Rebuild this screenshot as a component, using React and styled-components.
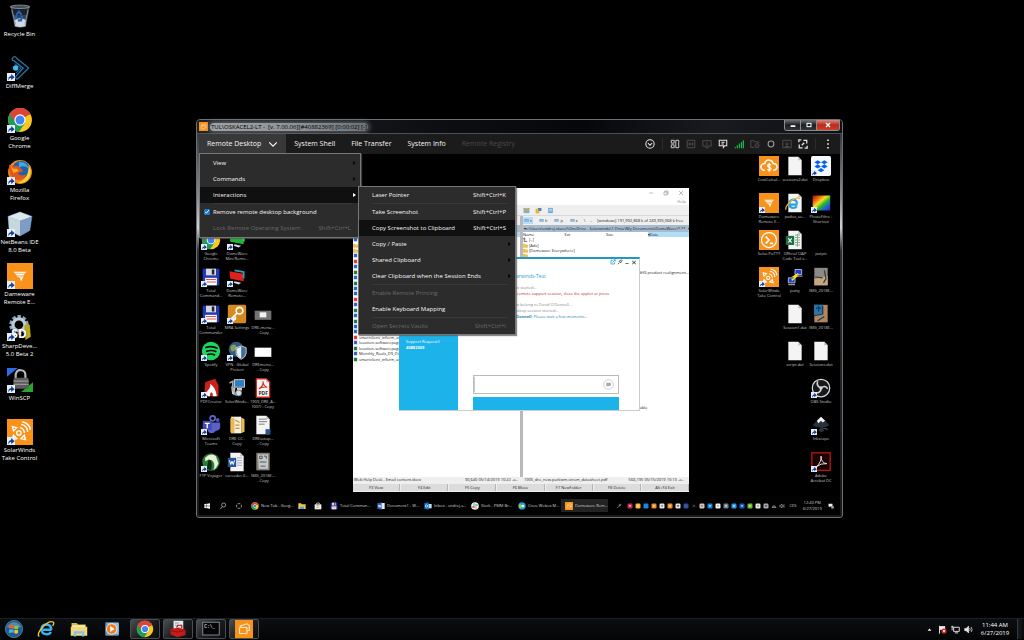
import React from 'react'
import styled, { createGlobalStyle, css } from 'styled-components'

const GlobalStyle = createGlobalStyle`
  * {
    box-sizing: border-box;
  }
  body {
    margin: 0;
    background: #000;
    color: #fff;
    font-family: 'Open Sans', 'Noto Sans', sans-serif;
    font-size: 6px;
    line-height: 8px;
  }
  button, input, textarea, table {
    font: inherit;
    color: inherit;
  }
  button {
    border: 0;
    padding: 0;
    background: none;
  }
  svg {
    display: block;
  }
`

/* ---------- desktop ---------- */

const Desktop = styled.div`
  position: relative;
  min-height: 100vh;
  display: flex;
  flex-direction: column;
  overflow: hidden;
`

const DesktopIcons = styled.main`
  flex: 1;
  display: flex;
  flex-direction: column;
  align-items: flex-start;
  padding-top: 3px;
`

const Shortcut = styled.button`
  width: 39px;
  height: 52px;
  display: flex;
  flex-direction: column;
  align-items: center;
  gap: 1px;
  white-space: pre;
  text-align: center;
  line-height: 8px;
`

const Picture = styled.span`
  position: relative;
  width: ${(p) => p.$size}px;
  height: ${(p) => p.$size}px;
  flex: none;

  > svg {
    width: 100%;
    height: 100%;
  }
`

const ArrowBadge = styled.span`
  position: absolute;
  left: 0;
  bottom: 0;
  width: 32%;
  height: 32%;
  background: #e8eef6;

  svg {
    width: 100%;
    height: 100%;
  }
`

const Taskbar = styled.footer`
  height: 22px;
  padding-bottom: 1px;
  display: flex;
  align-items: stretch;
  gap: 3px;
  background: linear-gradient(#0c0f12, #030405);
  border-top: 1px solid #1b2024;
`

const TaskButton = styled.button`
  width: ${(p) => (p.$start ? 28 : 30)}px;
  display: flex;
  align-items: center;
  justify-content: center;
  ${(p) => p.$open && css`
    border: 1px solid #4a4d50;
    border-radius: 2px;
    background: linear-gradient(135deg, #4b4e51, #1d1f21 50%, #0b0c0d);
  `}

  svg {
    width: 18px;
    height: 18px;
  }
`

const Tray = styled.div`
  margin-left: auto;
  display: flex;
  align-items: center;
  gap: 4px;
`

const TrayIcon = styled.button`
  width: 9px;

  svg {
    width: 9px;
    height: 9px;
  }
`

const Clock = styled.time`
  width: 36px;
  text-align: center;
  white-space: pre;
`

const ShowDesktop = styled.button`
  align-self: stretch;
  width: 7px;
  border-left: 1px solid #33383c;
  background: linear-gradient(90deg, #1a1d20, #060708);
`

/* ---------- remote session window ---------- */

const SessionWindow = styled.section`
  position: absolute;
  left: 196px;
  right: 181px;
  top: 119px;
  bottom: 122px;
  display: flex;
  flex-direction: column;
  padding: 0 2px 2px;
  border: 1px solid #6b7075;
  border-radius: 4px 4px 3px 3px;
  background: linear-gradient(#25292d, #8c9094 20%, #d0d3d5 27%, #2a2e31 33%, #17191b);
`

const TitleBar = styled.header`
  height: 14px;
  margin: 0 -2px;
  padding-left: 2px;
  display: flex;
  align-items: center;
  gap: 2px;
  border-radius: 3px 3px 0 0;
  background: linear-gradient(100deg, #202428, #0d1013 35%, #05080b 60%, #171b20 80%, #0d0f12);
  border-bottom: 1px solid #4b5054;

  > svg {
    width: 9px;
    height: 9px;
  }
`

const WindowTitle = styled.h1`
  margin: 0;
  padding: 0 1px;
  font-size: 6px;
  font-weight: 400;
  line-height: 8px;
  color: #000;
  white-space: pre;
  border-radius: 4px;
  background: linear-gradient(90deg, #9fa3a6, #8b9094 60%, #6c7175);
  box-shadow: 0 0 4px 2px rgba(140, 146, 152, 0.5);
`

const Caption = styled.div`
  align-self: flex-start;
  margin-left: auto;
  margin-right: 2px;
  display: flex;
  border: 1px solid #8a8e91;
  border-top: 0;
  border-radius: 0 0 3px 3px;
  overflow: hidden;
`

const CaptionButton = styled.button`
  width: ${(p) => (p.$close ? 22 : 16)}px;
  height: 10px;
  display: flex;
  align-items: center;
  justify-content: center;
  border-right: ${(p) => (p.$close ? '0' : '1px solid #8a8e91')};
  background: ${(p) => (p.$close
    ? 'linear-gradient(#d98a80, #bb2a1b 50%, #c8442f)'
    : 'linear-gradient(#6d7276, #1c1f22 50%, #33373a)')};

  svg {
    width: 8px;
    height: 8px;
  }
`

const Toolbar = styled.nav`
  height: 20px;
  display: flex;
  align-items: stretch;
  background: #1b1b1b;
`

const TabSlot = styled.div`
  position: relative;
  display: flex;
`

const Tab = styled.button`
  display: flex;
  align-items: center;
  gap: 7px;
  padding: 0 8px;
  font-size: 7px;
  white-space: nowrap;
  color: ${(p) => (p.disabled ? '#4a4a4a' : '#f4f4f4')};
  background: ${(p) => (p.$active ? '#383838' : 'none')};

  svg {
    width: 10px;
    height: 10px;
  }
`

const Actions = styled.div`
  margin-left: auto;
  padding-right: 4px;
  display: flex;
  align-items: center;
`

const ActionButton = styled.button`
  width: 16px;
  height: 16px;
  display: flex;
  align-items: center;
  justify-content: center;
  color: ${(p) => (p.$dim ? '#565656' : '#e6e6e6')};

  svg {
    width: 10px;
    height: 10px;
  }
`

const ActionDivider = styled.span`
  width: 1px;
  height: 12px;
  margin: 0 4px;
  background: #2c2c2c;
`

const Menu = styled.ul`
  position: absolute;
  z-index: 3;
  left: ${(p) => (p.$nested ? 158 : 0)}px;
  top: ${(p) => (p.$nested ? -1 : 19)}px;
  width: ${(p) => (p.$nested ? 158 : 162)}px;
  margin: 0;
  padding: ${(p) => (p.$nested ? '0' : '1px 0')};
  list-style: none;
  background: #2c2c2c;
  border: 1px solid #777;
  box-shadow: 1px 1px 1px rgba(90, 90, 90, 0.7);
`

const MenuRow = styled.li`
  position: relative;
  height: 16px;
  display: flex;
  align-items: center;
  padding: 0 9px 0 13px;
  font-weight: 500;
  white-space: nowrap;
  color: ${(p) => (p.$disabled ? '#6a6a6a' : '#f6f6f6')};
  background: ${(p) => (p.$active ? '#101010' : 'none')};
`

const MenuButton = styled.button`
  flex: 1;
  display: flex;
  justify-content: space-between;
  font-weight: inherit;
`

const MenuLabel = styled.label`
  display: flex;
  align-items: center;
  gap: 3px;
  margin-left: -9px;

  input {
    width: 6px;
    height: 6px;
    margin: 0;
    accent-color: #1677c9;
  }
`

const MenuSeparator = styled.li`
  height: 1px;
  margin: 0 7px 0 13px;
  background: #383838;
`

const Caret = styled.span`
  position: absolute;
  right: 4px;
  border-left: 3px solid ${(p) => (p.$active ? '#fff' : '#0a0a0a')};
  border-top: 2px solid transparent;
  border-bottom: 2px solid transparent;
`

/* ---------- remote desktop contents ---------- */

const RemoteDesktop = styled.div`
  position: relative;
  flex: 1;
  display: flex;
  justify-content: space-between;
  padding-top: 2px;
  padding-right: 7px;
  background: #000;
`

const RemoteIcons = styled.div`
  display: grid;
  grid-template-columns: repeat(3, 24px);
  grid-auto-rows: 37px;
  column-gap: 2px;
`

const RemoteShortcut = styled.button`
  grid-row: ${(p) => p.$row};
  grid-column: ${(p) => p.$col};
  display: flex;
  flex-direction: column;
  align-items: center;
  gap: 1px;
  font-size: 4px;
  line-height: 5px;
  white-space: pre;
  color: #c4c4c4;
`

const RemoteTaskbar = styled.div`
  height: 19px;
  display: flex;
  align-items: center;
  padding-right: 6px;
  background: #020202;
  font-size: 4px;
  line-height: 6px;
  color: #d0d0d0;
`

const RemoteTask = styled.button`
  width: ${(p) => (p.$wide ? 47 : 16)}px;
  height: 13px;
  display: flex;
  align-items: center;
  gap: 2px;
  padding: 0 4px;
  white-space: nowrap;
  background: ${(p) => (p.$active ? '#232323' : 'none')};

  svg {
    flex: none;
    width: 8px;
    height: 8px;
  }
`

const RemoteTray = styled.div`
  flex: 1;
  display: flex;
  align-items: center;
  justify-content: space-between;
  padding-left: 8px;

  svg {
    width: 6px;
    height: 6px;
  }
`

const TrayDots = styled.div`
  display: flex;
  gap: 2px;
`

const RemoteClock = styled.time`
  width: 22px;
  text-align: center;
  white-space: pre;
`

const Commander = styled.section`
  position: absolute;
  z-index: 1;
  left: 154px;
  top: 34px;
  width: 336px;
  height: 304px;
  display: flex;
  flex-direction: column;
  background: #fff;
  color: #222;
  font-size: 4px;
  line-height: 5px;
`

const CommanderTitle = styled.header`
  height: 17px;
  padding: 2px 3px 1px;
  display: flex;
  flex-direction: column;
  align-items: flex-end;
  justify-content: space-between;
  color: #777;
`

const CommanderCaption = styled.div`
  display: flex;
  gap: 9px;
  padding-right: 2px;

  svg {
    width: 6px;
    height: 6px;
  }
`

const CommanderTools = styled.div`
  height: 11px;
  display: flex;
  align-items: center;
  gap: 5px;
  padding-left: 158px;
  background: #efefef;
  border-bottom: 1px solid #d8d8d8;

  svg {
    width: 7px;
    height: 7px;
  }
`

const Panes = styled.div`
  flex: 1;
  min-height: 0;
  display: grid;
  grid-template-columns: 167px 3px 1fr;
`

const Splitter = styled.div`
  background: #b9b9bb;
`

const Pane = styled.div`
  min-width: 0;
  overflow: hidden;
`

const Drives = styled.div`
  height: 9px;
  display: flex;
  align-items: center;
  gap: 5px;
  background: #efefef;
  white-space: nowrap;
`

const Drive = styled.button`
  display: flex;
  align-items: center;
  gap: 1px;
  height: 7px;
  padding: 0 1px;
  background: ${(p) => (p.$active ? '#b9dcf8' : 'none')};

  svg {
    width: 5px;
    height: 5px;
  }
`

const PathBar = styled.div`
  height: 7px;
  display: flex;
  align-items: center;
  justify-content: space-between;
  padding: 0 3px 0 1px;
  white-space: pre;
  background: #a9bccf;
  color: #101820;
`

const Files = styled.table`
  width: 100%;
  height: ${(p) => p.$height}px;
  table-layout: fixed;
  border-collapse: collapse;
  line-height: 5px;

  th, td {
    height: 5px;
    padding: 0;
    text-align: left;
    font-weight: 400;
    white-space: nowrap;
  }
  th:last-child {
    background: #b3dcf7;
  }
  td.end {
    text-align: right;
  }
`

const FileName = styled.span`
  display: flex;
  align-items: center;
  gap: 1px;

  svg {
    width: 5px;
    height: 5px;
  }
`

const StatusRow = styled.div`
  height: 6px;
  display: grid;
  grid-template-columns: 170px 1fr;
  background: #efefef;
`

const Status = styled.div`
  display: flex;
  justify-content: space-between;
  padding: 0 5px 0 1px;
  white-space: nowrap;
`

const FunctionKeys = styled.div`
  height: 9px;
  display: grid;
  grid-template-columns: repeat(7, 1fr);
  gap: 1px;
  padding: 1px 0;
  background: #efefef;

  button {
    background: #dcdcdc;
    border-right: 1px solid #b5b5b5;
  }
`

const Applet = styled.section`
  position: absolute;
  z-index: 2;
  left: 200px;
  top: 103px;
  width: 241px;
  height: 154px;
  display: flex;
  background: #fff;
  border-top: 2px solid #2196c8;
  border-right: 1px solid #ccc;
  border-bottom: 1px solid #ccc;
  font-size: 4px;
  line-height: 6px;
`

const AppletSide = styled.aside`
  width: 59px;
  padding: 80px 7px 0;
  background: #1cb3ea;
  color: #fff;
`

const AppletMain = styled.div`
  flex: 1;
  display: flex;
  flex-direction: column;
  padding: 0 20px 0 15px;
`

const AppletCaption = styled.div`
  display: flex;
  justify-content: flex-end;
  gap: 1px;
  height: 6px;
  margin-right: -18px;
  color: #333;

  svg {
    width: 6px;
    height: 6px;
  }
`

const AppletHeading = styled.h2`
  margin: 7px 0 5px 43px;
  font-size: 5px;
  font-weight: 400;
  line-height: 8px;
  color: #1d9fd6;
`

const Messages = styled.div`
  flex: 1;
  padding-left: 43px;
  white-space: nowrap;
`

const Message = styled.p`
  margin: 0;
  color: ${(p) => p.$color || '#888'};
  height: ${(p) => (p.$gap ? 11 : 6)}px;
`

const Reply = styled.div`
  height: 19px;
  margin-bottom: 3px;
  display: flex;
  align-items: center;
  padding-right: 4px;
  border: 1px solid #bbb;

  textarea {
    flex: 1;
    height: 15px;
    padding: 1px;
    border: 0;
    border-left: 1px solid #ccc;
    resize: none;
    color: #333;
    background: none;
  }
  svg {
    width: 11px;
    height: 11px;
  }
`

const SendButton = styled.button`
  height: 13px;
  background: #1cb3ea;
`

/* ---------- drawings ---------- */

const Svg = ({ box = 24, children, ...props }) => (
  <svg viewBox={`0 0 ${box} ${box}`} fill="none" aria-hidden="true" {...props}>{children}</svg>
)

const Line = ({ children, width = 2 }) => (
  <Svg stroke="currentColor" strokeWidth={width}>{children}</Svg>
)

const Chrome = () => (
  <Svg>
    <circle cx="12" cy="12" r="11" fill="#fbc81e" />
    <path d="M12 12L2.5 6.5A11 11 0 0 1 21.5 6.5Z" fill="#db4537" />
    <path d="M12 12L2.5 6.5A11 11 0 0 0 11 23L16.8 14.5Z" fill="#1f9d58" />
    <path d="M12 7H21.8A11 11 0 0 0 2.5 6.5L7.5 14Z" fill="#db4537" />
    <circle cx="12" cy="12" r="5.2" fill="#fff" />
    <circle cx="12" cy="12" r="4.1" fill="#4285f4" />
  </Svg>
)

const RecycleBin = () => (
  <Svg>
    <path d="M3 3L21 3L17.5 22Q12 24 7 22Z" fill="#39434c" />
    <path d="M5 5L19 5L18 11L6 11Z" fill="#1a222a" />
    <path d="M6.5 16Q12 12 17.8 16L17 21.500Q12 23 7.500 21.500Z" fill="#d4d9dd" />
    <ellipse cx="12" cy="3.500" rx="9" ry="1.500" fill="#3f4951" stroke="#949da4" strokeWidth=".8" />
    <path d="M8.500 11L11 8L13.500 11M14 12L13 16H10M9 15L7.800 12" stroke="#2163c4" strokeWidth="2" />
    <path d="M4.500 6L8 20M19.500 6L16.500 20" stroke="#8f9aa3" strokeWidth=".8" />
  </Svg>
)

const DiffMerge = () => (
  <Svg>
    <path d="M5 3Q7 0 9 3L20 12L10 22Q8 23 8 20L15 12L6 5Q4 5 5 3Z" stroke="#2c6f9b" strokeWidth="1.200" fill="#05090d" />
    <path d="M7 8L13 12L8 17" stroke="#1d5f8c" />
    <circle cx="8" cy="12" r="2.500" fill="#40b9ef" />
  </Svg>
)

const Firefox = () => (
  <Svg>
    <circle cx="12" cy="12" r="11" fill="#f08a17" />
    <circle cx="13" cy="9.500" r="8" fill="#1c62ad" />
    <path d="M11 3Q18 2 20 9Q16 5 11 8Z" fill="#48a5dc" />
    <path d="M2 5L6 7Q9 5 12 8L15 11L10 13Q12 17 18 14Q15 21 8 19Q1 17 2 5Z" fill="#e2571b" />
    <path d="M3 6L6 9L9 9L11 11L6 13Z" fill="#f9a529" />
    <path d="M20 6Q24 12 20 18Q16 23 10 22Q20 19 20 6Z" fill="#fcd23e" />
  </Svg>
)

const Cube = () => (
  <Svg>
    <path d="M12 1L23 5L21 18L12 23L2 18L1 5Z" fill="#8ea9c8" stroke="#2c4f85" />
    <path d="M12 1L23 5L12 9L1 5Z" fill="#dde9ed" />
    <path d="M12 9L23 5L21 18L12 23Z" fill="#7f9cc2" />
    <path d="M12 9L1 5L2 18L12 23Z" fill="#c6d7dd" />
  </Svg>
)

const Orange = ({ children }) => (
  <Svg>
    <rect width="24" height="24" fill="#f9921b" />
    {children}
  </Svg>
)

const Dameware = () => (
  <Orange>
    <path d="M6 8L18 8L15.500 11L9 11.500Z" fill="#fff" />
    <path d="M9 12L15.500 11.500L14.500 14L13 17L12 14Z" fill="#fff" />
    <path d="M7 9.500L17 9.500M10 13L15 12.500" stroke="#f9921b" strokeWidth=".6" />
  </Orange>
)

const TakeControl = () => (
  <Orange>
    <g stroke="#fff" strokeWidth="1.300">
      <circle cx="11" cy="13" r="2" />
      <path d="M5 7L9 8L6 11ZM5 19L6 15L9 18ZM17 19L13 18L16 15Z" />
      <path d="M12 8Q16 9 16 13M13 5Q19 6 19 12M14 2.500Q21 4 21.500 10" />
    </g>
  </Orange>
)

const CostCalc = () => (
  <Orange>
    <path d="M7 17H5Q1 15 3 11Q4 9 7 9Q8 4 13 5Q16 5 17 9Q22 9 21.500 14Q21 17 17 17" stroke="#fff" strokeWidth="1.800" />
    <path d="M14.500 11Q12 9 10.500 11Q10 13 12.500 13.500Q15 14 14 16.500Q12 18 10 16M12.300 8.500V19" stroke="#fff" strokeWidth="1.500" />
  </Orange>
)

const SolarPutty = () => (
  <Orange>
    <circle cx="12" cy="12" r="9" stroke="#fff" strokeWidth="1.500" />
    <path d="M8 8L12 12L8 16M13 16H17" stroke="#fff" strokeWidth="2" />
  </Orange>
)

const SharpDevelop = () => (
  <Svg>
    <circle cx="11" cy="9" r="7" stroke="#8fa3b5" strokeWidth="4" strokeDasharray="3 1.500" />
    <circle cx="11" cy="9" r="5.500" stroke="#bccbd8" strokeWidth="3" />
    <path d="M16 10Q18 7 21 9L22 20L17 23Z" fill="#b5a91d" />
    <text x="4" y="21" fontSize="11" fontWeight="700" fill="#fff" stroke="#222" strokeWidth=".5" paintOrder="stroke" fontFamily="Open Sans">SD</text>
  </Svg>
)

const WinScp = () => (
  <Svg>
    <path d="M0 1H10L0 9Z" fill="#2c6ce4" />
    <path d="M24 23H13L24 14Z" fill="#25a82d" />
    <path d="M8 12V7Q9 2 13 3Q17 3 17 8V12" stroke="#b8b8b8" strokeWidth="2" />
    <rect x="6" y="10" width="14" height="10" rx="1.500" fill="#5c5c5c" />
    <path d="M6 13H20M6 16H20" stroke="#969696" />
  </Svg>
)

const WindowsOrb = () => (
  <Svg>
    <circle cx="12" cy="12" r="11.500" fill="#1d5c8e" stroke="#5f8fb0" />
    <path d="M2 9Q12 -4 22 9Q12 14 2 9Z" fill="#6fa5c8" opacity=".6" />
    <path d="M6 7Q9 5 11.500 7V11.500Q8 10 5.500 11.500Z" fill="#ee6030" />
    <path d="M12.500 7Q15 8.500 18 7L17.500 11.500Q15 13 12.500 11.500Z" fill="#8dc63f" />
    <path d="M5.500 13Q8 11.500 11.500 13V17Q8 16 5 17.500Z" fill="#4fb0e8" />
    <path d="M12.500 13Q15 14 17.500 13L17 17.500Q15 18.500 12.500 17.500Z" fill="#fdc72f" />
  </Svg>
)

const Explorer = () => (
  <Svg>
    <path d="M2 4H9L11 6H21V20H2Z" fill="#d9b44d" />
    <path d="M3 7H20V14H3Z" fill="#fbefb5" />
    <path d="M1 9H23V21H1Z" fill="#f3d77e" />
    <path d="M5 15H19V22H16V18H8V22H5Z" fill="#7fc4ec" />
  </Svg>
)

const IeLogo = () => (
  <Svg>
    <path d="M19.500 13H8M19 13Q19 6 12.500 6Q6 6.500 6 13Q6.500 19 13 19Q17 19 18.500 16" stroke="#35b2f2" strokeWidth="3.400" />
    <path d="M3 22Q-1 19 8 9Q17 0 22 3Q23 4 21 8" stroke="#f8c62c" strokeWidth="1.800" />
  </Svg>
)

const MediaPlayer = () => (
  <Svg>
    <rect x="3" y="3" width="18" height="18" rx="1" fill="#5f95bd" />
    <rect x="6" y="4" width="15" height="15" fill="#93c0de" />
    <circle cx="11.500" cy="12" r="7" fill="#ef7a22" stroke="#fff" />
    <path d="M9.500 8L15.500 12L9.500 16Z" fill="#fff" />
  </Svg>
)

const Toolbox = () => (
  <Svg>
    <path d="M6 1H19V12H6Z" fill="#e7e9ea" />
    <path d="M8 4H13M8 7H12" stroke="#6a87a8" />
    <path d="M2 12L13 10L22 13V20L11 23L2 19Z" fill="#c21d1b" />
    <path d="M2 14L11 16L22 14" stroke="#7d0d0d" />
    <path d="M10 10L12 7H17V11" stroke="#9c1514" strokeWidth="1.500" />
  </Svg>
)

const Terminal = () => (
  <Svg>
    <rect x="1" y="3" width="22" height="17" fill="#050505" stroke="#8b8f93" strokeWidth="1.200" />
    <text x="3" y="11" fontSize="6" fill="#fff" fontFamily="Liberation Mono">C:\_</text>
  </Svg>
)

const RemoteApp = () => (
  <Orange>
    <path d="M9 10L7 8L16 5L19 7V14H17" stroke="#ffe9cf" strokeWidth="1.500" />
    <rect x="6" y="10" width="10" height="8" rx="1" stroke="#ffe9cf" strokeWidth="1.500" />
  </Orange>
)

const Floppy = () => (
  <Svg>
    <path d="M2 2H22V22H4L2 20Z" fill="#2338b5" />
    <rect x="6" y="2" width="12" height="8" fill="#d7d9e0" />
    <rect x="13" y="3" width="3" height="6" fill="#222" />
    <rect x="5" y="13" width="14" height="9" fill="#fff" />
    <path d="M6 15H18M6 18H18" stroke="#d33" />
  </Svg>
)

const Panel = ({ color, accent }) => (
  <Svg>
    <path d="M3 5L20 8V17L4 14Z" fill={color} />
    <path d="M9 3L21 5V14L19 13V7L9 5Z" fill={accent} />
    <path d="M9 17L17 19L14 21L8 19Z" fill="#d6dbe0" />
  </Svg>
)

const KeyTile = () => (
  <Svg>
    <rect x="1" y="1" width="22" height="22" rx="2" fill="#d58a20" />
    <circle cx="15" cy="8" r="4" stroke="#fff" strokeWidth="2" />
    <path d="M12 11L5 18V20H8V18H10V15" stroke="#fff" strokeWidth="2" />
  </Svg>
)

const Thumb = ({ gray }) => (
  <Svg>
    <rect x="2" y="8" width="20" height="11" fill={gray ? '#737373' : '#fff'} />
    {gray && <rect x="8" y="10" width="8" height="6" fill="#f2f2f2" />}
  </Svg>
)

const Spotify = () => (
  <Svg>
    <circle cx="12" cy="12" r="11" fill="#1ed760" />
    <path d="M5 8Q13 5 20 9M6 12.500Q13 10 18.500 13M7 16.500Q12 14.500 17 17" stroke="#0a0a0a" strokeWidth="2" />
  </Svg>
)

const Shield = () => (
  <Svg>
    <circle cx="11" cy="10" r="9" fill="#2f5d7e" />
    <path d="M4 7Q9 1 12 8Q8 14 5 12Z" fill="#8e9b57" />
    <path d="M11 8L17 6L23 8V15Q22 20 17 22Q11 19 11 15Z" fill="#3d6f9d" stroke="#dce4ea" />
    <path d="M17 7V21Q12 19 12 14V9Z" fill="#e9eef2" />
  </Svg>
)

const PdfCreator = () => (
  <Svg>
    <path d="M5 5L17 1L21 9V22H4Z" fill="#c9211c" />
    <path d="M8 22Q5 17 10 13Q12 10 11 7Q18 12 19 22L14 22Q15 18 12 17Q10 19 11 22Z" fill="#fff" />
  </Svg>
)

const Setup = () => (
  <Svg>
    <rect x="9" y="2" width="12" height="9" fill="#2e7fc0" stroke="#ddd" />
    <path d="M12 12H18V15H12Z" fill="#ccc" />
    <path d="M5 10L10 12L9 21L6 19Z" fill="#c8ccd0" />
    <path d="M3 6L7 4V13L11 21" stroke="#a6a6a6" strokeWidth="2" />
    <circle cx="14" cy="18" r="3.500" fill="#d8dcdf" stroke="#6a7f92" />
  </Svg>
)

const Page = ({ children }) => (
  <Svg>
    <path d="M4 1H16L20 5V23H4Z" fill="#f4f4f4" />
    <path d="M16 1V5H20Z" fill="#bdbdbd" />
    {children}
  </Svg>
)

const PdfPage = () => (
  <Page>
    <path d="M4 1H16L20 5V23H4Z" stroke="#d7281d" strokeWidth="1.500" />
    <path d="M7 13Q13 9 12 4Q12 10 17 11Q11 10 7 13" stroke="#d7281d" strokeWidth="1.300" />
    <text x="6.500" y="20" fontSize="6" fontWeight="700" fill="#333" fontFamily="Open Sans">PDF</text>
  </Page>
)

const WordPage = () => (
  <Page>
    <path d="M12 7H18M12 10H18M12 13H18M12 16H18" stroke="#8aa0c0" />
    <rect x="1" y="7" width="10" height="11" fill="#2a5699" />
    <path d="M3 10L4.500 15L6 11L7.500 15L9 10" stroke="#fff" strokeWidth="1.200" />
  </Page>
)

const TextPage = () => (
  <Page>
    <path d="M7 5H16M7 8H17M7 11H14" stroke="#666" />
    <rect x="15" y="17" width="6" height="6" fill="#2a5699" />
  </Page>
)

const ExcelPage = () => (
  <Page>
    <path d="M12 6H18M12 9H18M12 12H18M12 15H18M12 18H18M15 5V20" stroke="#6fa183" />
    <rect x="1" y="7" width="10" height="11" fill="#1e7145" />
    <path d="M4 10L8 15M8 10L4 15" stroke="#fff" strokeWidth="1.400" />
  </Page>
)

const IePage = () => (
  <Page>
    <path d="M15 14H6M14.500 13Q14 8 9.500 8Q5 9 5 13.500Q6 18 10 18Q13 18 14 16" stroke="#2aa0e4" strokeWidth="2.600" />
    <path d="M1 20Q0 16 8 9Q15 4 18 7" stroke="#f0b92a" strokeWidth="1.500" />
  </Page>
)

const Teams = () => (
  <Svg>
    <circle cx="14" cy="4" r="3" stroke="#6168cf" strokeWidth="2" />
    <circle cx="20" cy="6" r="2.300" fill="#4b53bc" />
    <path d="M9 9H23V15Q22 19 18 19Q16 22 12 22Q8 21 8 17Z" fill="#5b62c7" />
    <rect x="2" y="7" width="11" height="11" fill="#434bb0" />
    <path d="M4.500 10H10.500M7.500 10V16" stroke="#fff" strokeWidth="1.600" />
  </Svg>
)

const DocFolder = () => (
  <Svg>
    <path d="M5 2H17V22H5Z" fill="#f4f0e4" />
    <path d="M4 4L9 3V22L4 21ZM17 3L21 5V20L17 22Z" fill="#e8bb53" />
    <path d="M10 6L15 9M10 12H15M10 16H15" stroke="#d88a35" strokeWidth="1.500" />
  </Svg>
)

const Voyager = () => (
  <Svg>
    <circle cx="12" cy="12" r="10.500" fill="#2b7d3a" />
    <path d="M5 7Q12 0 18 5L21 14Q18 20 15 22Q18 14 13 10Q9 8 5 11Z" fill="#e9efd9" />
    <path d="M9 9Q15 9 12 22L7 20Z" fill="#0b2b12" />
  </Svg>
)

const photoColors = {
  desk: ['#8b8577', '#c3c8cb', '#39424c'],
  sand: ['#8d8a86', '#b9b2a6', '#3f3b36'],
  blue: ['#b08560', '#2378b4', '#143a5a'],
}

const Photo = ({ kind }) => {
  const [back, shape, detail] = photoColors[kind]
  return (
    <Svg>
      <rect x="4" y="1" width="16" height="21" fill={back} />
      {kind === 'desk' && <path d="M6 3H18V20H7Z" fill={shape} />}
      {kind === 'desk' && <path d="M8 5H11V8H8ZM13 5H16V8M8 12H16M9 17H15" stroke={detail} />}
      {kind === 'sand' && <path d="M4 14L20 11V22H4Z" fill="#c4a883" />}
      {kind === 'sand' && <path d="M5 12L14 13M16 4L18 14L15 19" stroke={detail} strokeWidth="1.500" />}
      {kind === 'blue' && <path d="M4 1H14V11L4 13Z" fill={shape} />}
      {kind === 'blue' && <path d="M6 5H12M9 2V9M4 14L14 12V2M8 20L16 15" stroke={detail} strokeWidth="1.500" />}
    </Svg>
  )
}

const Dropbox = () => (
  <Svg>
    <rect width="24" height="24" rx="2" fill="#f5f8fc" />
    <path d="M8 5L12 7.500L8 10L4 7.500ZM16 5L20 7.500L16 10L12 7.500ZM8 10L12 12.500L8 15L4 12.500ZM16 10L20 12.500L16 15L12 12.500ZM12 14.500L16 17L12 19.500L8 17Z" fill="#0a5ff0" />
  </Svg>
)

const Rainbow = () => (
  <Svg>
    <defs>
      <linearGradient id="rainbow" x1="0" y1="0" x2="1" y2="1">
        <stop offset="0" stopColor="#a01010" />
        <stop offset=".25" stopColor="#f06a10" />
        <stop offset=".42" stopColor="#f5e020" />
        <stop offset=".6" stopColor="#28b52c" />
        <stop offset=".78" stopColor="#1b62dd" />
        <stop offset="1" stopColor="#5a1a9c" />
      </linearGradient>
    </defs>
    <rect x="2" y="3" width="21" height="18" fill="url(#rainbow)" />
  </Svg>
)

const Putty = () => (
  <Svg>
    <path d="M12 3H20V9H12ZM4 13H12V19H4Z" fill="#1b3be0" stroke="#c8ccd0" />
    <path d="M13 11H21M4 21H12" stroke="#9a9a9a" strokeWidth="1.500" />
    <path d="M16 8L11 11H14L8 16" stroke="#f5e020" strokeWidth="1.800" />
  </Svg>
)

const Obs = () => (
  <Svg>
    <circle cx="12" cy="12" r="10.500" fill="#17181a" stroke="#d8d8d8" strokeWidth="1.500" />
    <path d="M12 12Q6 10 8 4M12 12Q17 8 20 13M12 12Q12 18 6 18" stroke="#d8d8d8" strokeWidth="1.800" />
    <circle cx="12" cy="12" r="2" fill="#d8d8d8" />
  </Svg>
)

const Inkscape = () => (
  <Svg>
    <path d="M12 2L22 12Q18 15 14 15L16 19L12 21L9 18L12 15Q5 15 2 12Z" fill="#2b3139" />
    <path d="M12 2L17 7L14 9L12 7L9 10L7 7Z" fill="#f0f3f6" />
    <path d="M15 16Q19 16 20 18" stroke="#49525d" strokeWidth="1.500" />
  </Svg>
)

const Acrobat = () => (
  <Svg>
    <rect x="1" y="1" width="22" height="21" fill="#180404" stroke="#c61313" strokeWidth="1.500" />
    <path d="M6 18Q13 12 12 5Q12 13 19 14Q12 13 6 18" stroke="#f0dcd8" strokeWidth="1.200" />
  </Svg>
)

const Blank = () => <Svg />

const Winlogo = () => (
  <Svg><path d="M4 6L11 5V11.500H4ZM12 5L21 4V11.500H12ZM4 12.500H11V19L4 18ZM12 12.500H21V20L12 19Z" fill="#fff" /></Svg>
)

const Search = () => <Line><circle cx="14" cy="9" r="6" /><path d="M10 14L4 21" /></Line>

const Cortana = () => <Line><path d="M8 5H16M8 19H16M5 8V16M19 8V16" /></Line>

const FolderIcon = () => (
  <Svg>
    <path d="M1 4H9L11 7H23V21H1Z" fill="#f5c64f" />
    <path d="M6 14H18V21H6Z" fill="#4da3dc" />
  </Svg>
)

const Store = () => (
  <Svg>
    <path d="M2 7H22V22H2Z" fill="#f3f3f3" />
    <path d="M8 7V3H16V7" stroke="#f3f3f3" strokeWidth="2" />
    <path d="M8 10H11V13H8Z" fill="#e23e2b" /><path d="M13 10H16V13H13Z" fill="#6fb33a" />
    <path d="M8 15H11V18H8Z" fill="#2b9be2" /><path d="M13 15H16V18H13Z" fill="#f2b51d" />
  </Svg>
)

const Word = () => (
  <Svg>
    <path d="M12 3H23V21H12Z" fill="#e9eef6" />
    <path d="M1 4L14 1V23L1 20Z" fill="#2a5ebb" />
    <path d="M4 8L6 16L8 9L10 16L12 8" stroke="#fff" strokeWidth="1.800" />
  </Svg>
)

const Outlook = () => (
  <Svg>
    <path d="M12 6H23V19H12Z" fill="#bcd9f2" />
    <path d="M1 4L14 1V23L1 20Z" fill="#1272c4" />
    <circle cx="7.500" cy="12" r="3.500" stroke="#fff" strokeWidth="2" />
  </Svg>
)

const Slack = () => (
  <Svg>
    <circle cx="12" cy="12" r="11.500" fill="#f4f4f4" />
    <g strokeWidth="4">
      <path d="M9 4V11" stroke="#36c5f0" /><path d="M13 9H20" stroke="#2eb67d" />
      <path d="M15 13V20" stroke="#ecb22e" /><path d="M4 15H11" stroke="#e01e5a" />
    </g>
  </Svg>
)

const Webex = () => (
  <Svg>
    <circle cx="12" cy="12" r="11" fill="#1b9ed8" />
    <path d="M2 10Q8 2 13 12Q10 22 4 18Z" fill="#8ed14b" />
    <circle cx="15" cy="12" r="4" fill="#fff" />
  </Svg>
)

const Dot = ({ color, mark = '#fff' }) => (
  <Svg>
    <rect x="2" y="2" width="20" height="20" rx="5" fill={color} />
    <path d="M9 9H15V14H9Z" fill={mark} />
  </Svg>
)

/* ---------- data ---------- */

const desktopIcons = [
  ['Recycle Bin', RecycleBin, false],
  ['DiffMerge', DiffMerge, true],
  ['Google\nChrome', Chrome, true],
  ['Mozilla\nFirefox', Firefox, true],
  ['NetBeans IDE\n8.0 Beta', Cube, true],
  ['Dameware\nRemote E...', Dameware, true],
  ['SharpDeve...\n5.0 Beta 2', SharpDevelop, true],
  ['WinSCP', WinScp, true],
  ['SolarWinds\nTake Control', TakeControl, true],
]

// [row, column, label, icon, has shortcut arrow]
const remoteLeft = [
  [3, 1, 'Google\nChrome', <Chrome />, true],
  [3, 2, 'DameWare\nMini Remo...', <Panel color="#20b533" accent="#5fd65f" />, true],
  [4, 1, 'Total\nCommand...', <Floppy />, true],
  [4, 2, 'DameWare\nRemote...', <Panel color="#e02020" accent="#2aa3b8" />, true],
  [5, 1, 'Total\nCommander', <Floppy />, true],
  [5, 2, 'MRA Settings', <KeyTile />, true],
  [5, 3, 'DRE-menu...\n- Copy', <Thumb gray />],
  [6, 1, 'Spotify', <Spotify />, true],
  [6, 2, 'VPN - Global\nProtect', <Shield />, true],
  [6, 3, 'DREmenu...\n- Copy', <Thumb />],
  [7, 1, 'PDFCreator', <PdfCreator />, true],
  [7, 2, 'SolarWinds...', <Setup />],
  [7, 3, '1909_DRE_A...\n(007) - Copy', <PdfPage />],
  [8, 1, 'Microsoft\nTeams', <Teams />, true],
  [8, 2, 'DRE CC -\nCopy', <DocFolder />],
  [8, 3, 'DREsetup...\n- Copy', <TextPage />],
  [9, 1, 'FTP Voyager', <Voyager />, true],
  [9, 2, 'careeder-E...', <WordPage />],
  [9, 3, 'IMG_2018E...\n- Copy', <Photo kind="desk" />],
]

const remoteRight = [
  [1, 1, 'CostCalcul...', <CostCalc />],
  [1, 2, 'sessions2.dat', <Page />],
  [1, 3, 'Dropbox', <Dropbox />, true],
  [2, 1, 'Dameware\nRemote E...', <Dameware />, true],
  [2, 2, 'pados_so...', <IePage />],
  [2, 3, 'PhotoFiltre -\nShortcut', <Rainbow />, true],
  [3, 1, 'Solar-PuTTY', <SolarPutty />],
  [3, 2, 'Official CIAP\nCode Tool s...', <ExcelPage />],
  [3, 3, 'putpic', <Blank />],
  [4, 1, 'SolarWinds\nTake Control', <TakeControl />, true],
  [4, 2, 'putty', <Putty />],
  [4, 3, 'IMG_2018E...', <Photo kind="sand" />],
  [5, 2, 'Session1.dat', <Page />],
  [5, 3, 'IMG_2018E...', <Photo kind="blue" />],
  [6, 2, 'script.dat', <Page />],
  [6, 3, 'Sessions.dat', <Page />],
  [7, 3, 'OBS Studio', <Obs />, true],
  [8, 3, 'Inkscape', <Inkscape />, true],
  [9, 3, 'Adobe\nAcrobat DC', <Acrobat />, true],
]

const remoteTasks = [
  [Winlogo], [Search], [Cortana],
  [Chrome, 'New Tab - Goog...'],
  [FolderIcon], [Store],
  [Floppy, 'Total Comman...'],
  [Word, 'Document1 - W...'],
  [Outlook, 'Inbox - ondrej.s...'],
  [Slack, 'Slack - PMM Br...'],
  [Webex, 'Cisco Webex M...'],
  [RemoteApp, 'Dameware Rem...'],
]

const trayDots = [
  ['#c02a45'], ['#f0b73a', '#fff4d0'], ['#1787df', '#1787df'], ['#f08a24'], ['#e4e4e4', '#555'],
  ['#f5901e'], ['#e4e4e4', '#111'], ['#254fa5', '#c83a3a'], ['#0b0b0b', '#c25a20'], ['#c9c9c9', '#c33'],
  ['#1882d8'], ['#f1f1f1', '#888'], ['#6e8395'], ['#1ea0e0'], ['#0a62c8'], ['#6cbd2d'], ['#e8e8e8', '#2a8a4a'],
  ['#a8a8a8', '#222'],
]

const interactions = [
  { label: 'Laser Pointer', keys: 'Shift+Ctrl+K', separator: true },
  { label: 'Take Screenshot', keys: 'Shift+Ctrl+P' },
  { label: 'Copy Screenshot to Clipboard', keys: 'Shift+Ctrl+S', active: true },
  { label: 'Copy / Paste', caret: true },
  { label: 'Shared Clipboard', caret: true },
  { label: 'Clear Clipboard when the Session Ends', caret: true, separator: true },
  { label: 'Enable Remote Printing', disabled: true },
  { label: 'Enable Keyboard Mapping', separator: true },
  { label: 'Open Secrets Vaults', keys: 'Shift+Ctrl+I', disabled: true },
]

const leftNames = {
  18: 'smartclient_inform_art',
  19: 'location-softwarepage',
  20: 'location-softwarepage',
  21: 'Monthly_Roals_D9_D4',
  22: 'smartclient_inform_art',
}

const rightNames = { 0: '[..]', 1: '[Ads]', 2: '[Dameware Everywhere]' }

const drives = ['c', 'h', 'p', 'z']

const actions = [
  ['Dual screens', <Line><path d="M3 3H10V10H3ZM3 14H10V21H3ZM14 3H21V21H14Z" /></Line>],
  ['Fit to window', <Line><path d="M3 3H21V21H3ZM8 8V16M16 8V16M12 9V10M12 14V15M8 12H16" /></Line>, true],
  ['Screen', <Line><path d="M2 4H22V17H2ZM8 21H16M12 7V14" /></Line>, true],
  ['Chat', <Line width={2.5}><path d="M3 3H21V16H16L13 20V16H3ZM8 8H16M8 12H14" /></Line>],
  ['Signal', <Svg stroke="#19b544" strokeWidth="3"><path d="M3 22V19M8 22V15M13 22V11M18 22V7M22.500 22V3" /></Svg>],
  ['Shared folder', <Line><path d="M2 4H9L11 7H21V10M2 4V20H10" /><circle cx="17" cy="16" r="5" /><path d="M17 14V18" /></Line>, true],
  ['Record', <Line width={2.5}><circle cx="12" cy="12" r="7" stroke="#9b9b9b" /></Line>],
  ['Download', <Line><path d="M2 3H22V21H2ZM12 7V14M8 11L12 15L16 11M7 18H17" /></Line>, true],
  ['Full screen', <Line width={3}><path d="M2 8V2H8M16 22H22V16M13 3H21V11M11 21H3V13M9 15L15 9" /></Line>],
]

/* ---------- parts ---------- */

const Badge = () => (
  <ArrowBadge>
    <Svg><path d="M4 21Q3 10 12 9V3L22 12L12 20V14Q8 14 4 21Z" fill="#123f9b" /></Svg>
  </ArrowBadge>
)

const RemoteIconGrid = ({ items }) => (
  <RemoteIcons>
    {items.map(([row, col, label, icon, linked]) => (
      <RemoteShortcut key={`${row}-${col}`} $row={row} $col={col}>
        <Picture $size={20}>{icon}{linked && <Badge />}</Picture>
        {label}
      </RemoteShortcut>
    ))}
  </RemoteIcons>
)

const MenuItem = ({ label, keys, caret, active, disabled, children }) => (
  <MenuRow $active={active} $disabled={disabled}>
    <MenuButton disabled={disabled}>
      <span>{label}</span>
      {keys && <span>{keys}</span>}
    </MenuButton>
    {caret && <Caret $active={active && !keys} />}
    {children}
  </MenuRow>
)

const RemoteDesktopMenu = () => (
  <Menu>
    <MenuItem label="View" caret />
    <MenuItem label="Commands" caret />
    <MenuItem label="Interactions" caret active>
      <Menu $nested>
        {interactions.map(({ separator, ...item }) => (
          <React.Fragment key={item.label}>
            <MenuItem {...item} />
            {separator && <MenuSeparator />}
          </React.Fragment>
        ))}
      </Menu>
    </MenuItem>
    <MenuSeparator />
    <MenuRow>
      <MenuLabel>
        <input type="checkbox" defaultChecked />
        Remove remote desktop background
      </MenuLabel>
    </MenuRow>
    <MenuItem label="Lock Remote Operating System" keys="Shift+Ctrl+L" disabled />
  </Menu>
)

const fileColors = ['#2a5ebb', '#1e7145', '#2a5ebb', '#2a5ebb', '#d33', '#2a5ebb', '#1e7145']

const FileMark = ({ index, folder }) => (
  <Svg>
    {folder
      ? <path d="M1 5H9L11 8H23V21H1Z" fill="#f2c24c" stroke="#c8952a" />
      : <path d="M3 2H21V22H3Z" fill={fileColors[index % 7]} stroke="#fff" strokeWidth="3" />}
  </Svg>
)

const UpMark = () => <Svg><path d="M6 22V6M1 11L6 4L11 11M6 21H20" stroke="#222" strokeWidth="3" /></Svg>

const TotalCommander = () => (
  <Commander>
    <CommanderTitle>
      <CommanderCaption>
        <Line><path d="M5 12H19" /></Line>
        <Line><path d="M4 8H16V20H4ZM8 8V4H20V16H16" /></Line>
        <Line><path d="M4 4L20 20M20 4L4 20" /></Line>
      </CommanderCaption>
      Help
    </CommanderTitle>
    <CommanderTools>
      <Svg><path d="M2 8L12 3V20L2 16Z" fill="#b73a28" /></Svg>
      <Svg><path d="M2 4H22V21H2Z" fill="#78b1e0" /><path d="M2 4L12 13L22 4" stroke="#e8a020" strokeWidth="4" /></Svg>
      <Svg><path d="M2 6H15V22H2Z" fill="#e5b53c" /><path d="M10 3H22V14H13Z" fill="#4b84b9" /></Svg>
      <Svg><path d="M4 3H20V21H4Z" fill="#6ba9d6" /><path d="M7 8H17M7 13H17" stroke="#fff" strokeWidth="2" /></Svg>
    </CommanderTools>
    <Panes>
      <Pane>
        <Drives />
        <PathBar />
        <Files $height={130}>
          <thead><tr><th>Name</th></tr></thead>
          <tbody>
            {Array.from({ length: 23 }, (_, i) => (
              <tr key={i}>
                <td><FileName><FileMark index={i} folder={i > 0 && i < 3} />{leftNames[i]}</FileName></td>
              </tr>
            ))}
          </tbody>
        </Files>
      </Pane>
      <Splitter />
      <Pane>
        <Drives>
          {drives.map((d, i) => (
            <Drive key={d} $active={i === 0}>
              <Svg><path d="M2 6H22V18H2Z" fill="#5b9bd0" /><path d="M5 14H19" stroke="#fff" strokeWidth="3" /></Svg>
              {d}
            </Drive>
          ))}
          <span>\</span>
          <span>..</span>
          <span>[windows] 191,992,868 k of 249,395,068 k free</span>
        </Drives>
        <PathBar>
          <span>▾c:\Users\ondrej.skacel\OneDrive - Solarwinds\1 Drive\My Documents\DameWare\*.*</span>
          <span>*  ▾</span>
        </PathBar>
        <Files $height={178}>
          <thead><tr><th>Name</th><th>Ext</th><th>Size</th><th>▾Date</th></tr></thead>
          <tbody>
            {Array.from({ length: 32 }, (_, i) => (
              <tr key={i}>
                <td colSpan={2}>
                  <FileName>
                    {i === 0 && <UpMark />}
                    {i > 0 && i < 4 && <FileMark folder />}
                    {rightNames[i]}
                  </FileName>
                </td>
                {i === 6
                  ? <td colSpan={2} className="end">GHS product realignment...</td>
                  : <td className="end">{i === 31 ? 'able' : ''}</td>}
              </tr>
            ))}
          </tbody>
        </Files>
      </Pane>
    </Panes>
    <StatusRow>
      <Status>
        <span>Web Help Desk - Email content.docx</span>
        <span>90,640 05/14/2019 10:22 -a--</span>
      </Status>
      <Status>
        <span>1905_dre_new-parkwm-strom_datasheet.pdf</span>
        <span>566,195 05/15/2019 10:13 -a--</span>
      </Status>
    </StatusRow>
    <FunctionKeys>
      {['F3 View', 'F4 Edit', 'F5 Copy', 'F6 Move', 'F7 NewFolder', 'F8 Delete', 'Alt+F4 Exit'].map((key) => (
        <button key={key}>{key}</button>
      ))}
    </FunctionKeys>
  </Commander>
)

const SupportApplet = () => (
  <Applet>
    <AppletSide>
      Support Request#
      <br />
      <strong>40882369</strong>
    </AppletSide>
    <AppletMain>
      <AppletCaption>
        <Svg stroke="#1d9fd6" strokeWidth="3"><path d="M11 5H4V20H18V13M10 14L21 3M14 3H21V10" /></Svg>
        <Svg stroke="#333" strokeWidth="3"><path d="M3 21L9 15M8 9L15 16L17 10L21 7L17 3L14 7Z" /></Svg>
        <Svg stroke="#333" strokeWidth="3"><path d="M6 18H18" /></Svg>
        <Svg stroke="#333" strokeWidth="4"><path d="M5 8L19 20M19 8L5 20" /></Svg>
      </AppletCaption>
      <AppletHeading>arwinds-Test</AppletHeading>
      <Messages>
        <Message>w started...</Message>
        <Message $color="#c4202a" $gap>&nbsp;remote support session, close the applet or press</Message>
        <Message>w belong to David O'Donnell...</Message>
        <Message>sktop session started...</Message>
        <Message $color="#1585bd"><strong>Donnell</strong>: Please wait a few moments...</Message>
      </Messages>
      <Reply>
        <textarea aria-label="Message" rows="1" />
        <Svg>
          <circle cx="12" cy="12" r="10.500" stroke="#bbb" strokeWidth="1.500" />
          <path d="M7 8H17V15H12L10 17V15H7Z" fill="#aaa" />
        </Svg>
      </Reply>
      <SendButton aria-label="Send" />
    </AppletMain>
  </Applet>
)

const App = () => (
  <>
    <GlobalStyle />
    <Desktop>
      <DesktopIcons>
        {desktopIcons.map(([label, Icon, linked]) => (
          <Shortcut key={label}>
            <Picture $size={26}><Icon />{linked && <Badge />}</Picture>
            {label}
          </Shortcut>
        ))}
      </DesktopIcons>

      <SessionWindow>
        <TitleBar>
          <RemoteApp />
          <WindowTitle>TUL\OSKACEL2-LT -  [v. 7.00.06][#40882369] [0:00:02] [-]</WindowTitle>
          <Caption>
            <CaptionButton aria-label="Minimize"><Svg><path d="M5 13H19V18H5Z" fill="#fff" /></Svg></CaptionButton>
            <CaptionButton aria-label="Maximize"><Svg><rect x="6" y="7" width="12" height="10" stroke="#fff" strokeWidth="3" /></Svg></CaptionButton>
            <CaptionButton $close aria-label="Close"><Svg><path d="M6 6L18 18M18 6L6 18" stroke="#fff" strokeWidth="4" /></Svg></CaptionButton>
          </Caption>
        </TitleBar>
        <Toolbar>
          <TabSlot>
            <Tab $active>
              Remote Desktop
              <Line width={3}><path d="M3 8L12 17L21 8" /></Line>
            </Tab>
            <RemoteDesktopMenu />
          </TabSlot>
          <Tab>System Shell</Tab>
          <Tab>File Transfer</Tab>
          <Tab>System Info</Tab>
          <Tab disabled>Remote Registry</Tab>
          <Actions>
            <ActionButton aria-label="Collapse">
              <Line width={2.5}><circle cx="12" cy="12" r="10" /><path d="M7 10L12 15L17 10" /></Line>
            </ActionButton>
            <ActionDivider />
            {actions.map(([label, icon, dim]) => (
              <ActionButton key={label} aria-label={label} $dim={dim}>{icon}</ActionButton>
            ))}
            <ActionDivider />
            <ActionButton aria-label="More">
              <Svg><path d="M10 1H14V5H10ZM10 10H14V14H10ZM10 19H14V23H10Z" fill="currentColor" /></Svg>
            </ActionButton>
          </Actions>
        </Toolbar>
        <RemoteDesktop>
          <RemoteIconGrid items={remoteLeft} />
          <TotalCommander />
          <SupportApplet />
          <RemoteIconGrid items={remoteRight} />
        </RemoteDesktop>
        <RemoteTaskbar>
          {remoteTasks.map(([Icon, label], i) => (
            <RemoteTask key={i} $wide={!!label} $active={Icon === RemoteApp}>
              <Icon />
              {label}
            </RemoteTask>
          ))}
          <RemoteTray>
            <Line><path d="M4 20L10 14M9 10L14 15M12 8L18 4L20 8L16 12Z" /></Line>
            <TrayDots>
              {trayDots.map(([color, mark], i) => <Dot key={i} color={color} mark={mark} />)}
              <Line><path d="M4 18Q12 2 20 18ZM8 18Q12 10 16 18" /></Line>
              <Line><path d="M3 9H7L12 4V20L7 15H3ZM16 8V16M20 5V19" /></Line>
            </TrayDots>
            <span>CES</span>
            <RemoteClock>{'12:43 PM\n6/27/2019'}</RemoteClock>
            <Svg><path d="M2 3H18V14H10L6 18V14H2Z" fill="#eee" /><circle cx="18" cy="17" r="6" fill="#999" /></Svg>
          </RemoteTray>
        </RemoteTaskbar>
      </SessionWindow>

      <Taskbar>
        <TaskButton $start aria-label="Start"><WindowsOrb /></TaskButton>
        <TaskButton aria-label="Internet Explorer"><IeLogo /></TaskButton>
        <TaskButton aria-label="Windows Explorer"><Explorer /></TaskButton>
        <TaskButton aria-label="Media Player"><MediaPlayer /></TaskButton>
        <TaskButton $open aria-label="Google Chrome"><Chrome /></TaskButton>
        <TaskButton $open aria-label="Toolbox"><Toolbox /></TaskButton>
        <TaskButton $open aria-label="Command Prompt"><Terminal /></TaskButton>
        <TaskButton $open aria-label="Take Control"><RemoteApp /></TaskButton>
        <Tray>
          <TrayIcon aria-label="Show hidden icons"><Svg><path d="M7 15L12 9L17 15Z" fill="#fff" /></Svg></TrayIcon>
          <TrayIcon aria-label="Action Center">
            <Svg>
              <path d="M4 2V23" stroke="#eee" strokeWidth="2.500" />
              <path d="M5 3H19V13H5Z" fill="#eee" />
              <circle cx="16" cy="16" r="7" fill="#d3281f" />
              <path d="M13 13L19 19M19 13L13 19" stroke="#fff" strokeWidth="2" />
            </Svg>
          </TrayIcon>
          <TrayIcon aria-label="Network">
            <Svg stroke="#e8e8e8" strokeWidth="2.500"><path d="M7 6H22V17H7ZM10 21H19M3 2V9M1 5H7M3 9V14" /></Svg>
          </TrayIcon>
          <TrayIcon aria-label="Volume">
            <Svg stroke="#e8e8e8" strokeWidth="2"><path d="M2 9H6L12 3V21L6 15H2Z" fill="#e8e8e8" /><path d="M15 8Q18 12 15 16M19 5Q24 12 19 19" /></Svg>
          </TrayIcon>
          <Clock>{'11:44 AM\n6/27/2019'}</Clock>
          <ShowDesktop aria-label="Show desktop" />
        </Tray>
      </Taskbar>
    </Desktop>
  </>
)

export default App
